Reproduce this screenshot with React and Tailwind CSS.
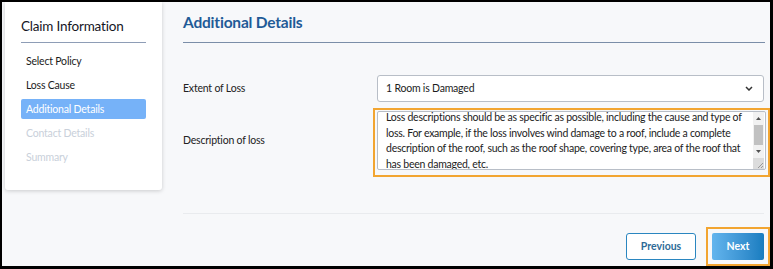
import React from "react";

const font = { fontFamily: "Lato, 'Noto Sans', sans-serif" };

function NavItem({ children, state }) {
  const cls =
    state === "active"
      ? "bg-[#76b2f8] text-white rounded-[2px]"
      : state === "disabled"
      ? "text-[#c9d0da]"
      : "text-[#1c1c1c]";
  return (
    <div className={`h-[20px] leading-[20px] px-[5px] text-[10.5px] tracking-[-0.2px] ${cls}`}>
      {children}
    </div>
  );
}

export default function App() {
  const lines = [
    "Loss descriptions should be as specific as possible, including the cause and type of",
    "loss. For example, if the loss involves wind damage to a roof, include a complete",
    "description of the roof, such as the roof shape, covering type, area of the roof that",
    "has been damaged, etc.",
  ];
  return (
    <div
      className="w-[773px] h-[269px] bg-black pt-[2px] pl-[2px] pr-[3px] pb-[3px]"
      style={font}
    >
      <div className="w-full h-full bg-[#f7f8fa] flex overflow-hidden">
        {/* Sidebar */}
        <div className="ml-[3px] w-[157px] h-[188px] bg-white shadow-[0_1px_4px_rgba(0,0,0,0.18)] rounded-b-[3px] pt-[14px] px-[16px] shrink-0">
          <div className="text-[13.5px] tracking-[-0.2px] leading-[20px] text-[#16161f] pb-[6px] border-b border-[#8e9db6]">
            Claim Information
          </div>
          <div className="mt-[8px] flex flex-col gap-[4px]">
            <NavItem>Select Policy</NavItem>
            <NavItem>Loss Cause</NavItem>
            <NavItem state="active">Additional Details</NavItem>
            <NavItem state="disabled">Contact Details</NavItem>
            <NavItem state="disabled">Summary</NavItem>
          </div>
        </div>

        {/* Main */}
        <div className="flex-1 min-w-0 pl-[21px] pr-[6px] pt-[8px] flex flex-col">
          <div className="text-[15.5px] tracking-[-0.2px] leading-[24px] font-bold text-[#1f5b97] pb-[8px] border-b-[1.5px] border-[#7b8ea8] mr-[-1px]">
            Additional Details
          </div>

          <div className="mt-[32px] flex items-center">
            <div className="w-[194px] shrink-0 text-[10.5px] tracking-[-0.2px] text-[#222]">Extent of Loss</div>
            <div className="flex-1 min-w-0 h-[27px] bg-white border border-[#b8bec7] rounded-[3px] flex items-center pl-[8px] pr-[10px]">
              <span className="flex-1 text-[10.5px] tracking-[-0.2px] text-[#1c1c1c]">1 Room is Damaged</span>
              <svg width="8" height="5" viewBox="0 0 8 5">
                <path d="M1 1l3 3L7 1" fill="none" stroke="#333" strokeWidth="1.5" />
              </svg>
            </div>
          </div>

          <div className="mt-[6px] flex items-center">
            <div className="w-[190px] shrink-0 text-[10.5px] tracking-[-0.2px] text-[#222] mt-[-4px]">Description of loss</div>
            <div className="flex-1 min-w-0 border-2 border-[#f2a531] pt-[1px] pb-[5px] px-[2px] mr-[-6px]">
              <div className="h-[59px] bg-white border border-[#b8bec7] rounded-[2px] flex overflow-hidden">
                <div className="flex-1 min-w-0 overflow-hidden pl-[8px] text-[10.5px] tracking-[-0.25px] leading-[15.5px] text-[#1c1c1c] mt-[-2px]">
                  {lines.map((l, i) => (
                    <div key={i} className="whitespace-nowrap">{l}</div>
                  ))}
                </div>
                <div className="w-[11px] shrink-0 mr-[1px] bg-[#f1f1f1] flex flex-col items-center">
                  <div className="h-[13px] flex items-center justify-center">
                    <svg width="5" height="3" viewBox="0 0 5 3"><path d="M0 3L2.5 0L5 3z" fill="#505050" /></svg>
                  </div>
                  <div className="w-[9px] h-[20px] bg-[#c1c1c1]" />
                  <div className="h-[13px] flex items-center justify-center">
                    <svg width="5" height="3" viewBox="0 0 5 3"><path d="M0 0L2.5 3L5 0z" fill="#505050" /></svg>
                  </div>
                  <div className="flex-1" />
                  <div className="w-[11px] h-[11px] bg-[#dcdcdc] flex items-end justify-end">
                    <svg width="8" height="8" viewBox="0 0 8 8">
                      <path d="M7 2L2 7M7 5L5 7" stroke="#888" strokeWidth="0.8" />
                    </svg>
                  </div>
                </div>
              </div>
            </div>
          </div>

          <div className="mt-[36px] h-[2px] bg-[#e9ebee]" />

          <div className="mt-[13px] flex justify-end items-start">
            <button className="mt-[6px] w-[70px] h-[27px] border-[1.5px] border-[#2a86c0] rounded-[3px] bg-white text-[10.5px] font-bold text-[#2e6b97]">
              Previous
            </button>
            <div className="ml-[10px] border-2 border-[#f2a531] p-[4px] mr-[-6px]">
              <button className="block w-[52px] h-[27px] rounded-[2px] bg-gradient-to-r from-[#63b5ee] to-[#177dc0] text-[10.5px] font-bold text-white">
                Next
              </button>
            </div>
          </div>
        </div>
      </div>
    </div>
  );
}
